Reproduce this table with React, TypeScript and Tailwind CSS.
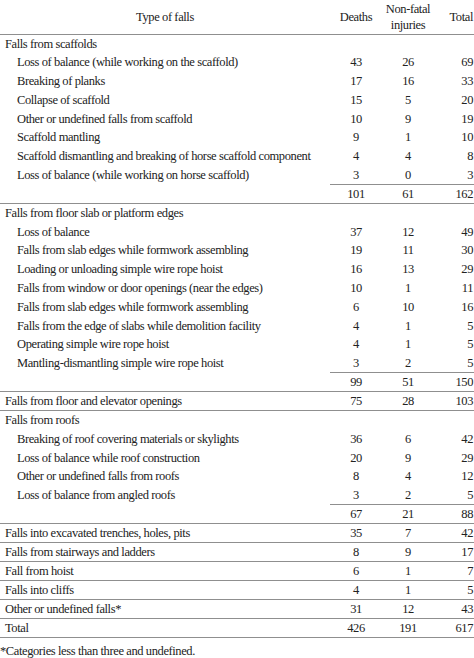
import React, { FC } from "react";

type Row = {
  label: string;
  d?: number;
  n?: number;
  t?: number;
  kind: "group" | "item" | "sub" | "single" | "total";
};

const rows: Row[] = [
  { label: "Falls from scaffolds", kind: "group" },
  { label: "Loss of balance (while working on the scaffold)", d: 43, n: 26, t: 69, kind: "item" },
  { label: "Breaking of planks", d: 17, n: 16, t: 33, kind: "item" },
  { label: "Collapse of scaffold", d: 15, n: 5, t: 20, kind: "item" },
  { label: "Other or undefined falls from scaffold", d: 10, n: 9, t: 19, kind: "item" },
  { label: "Scaffold mantling", d: 9, n: 1, t: 10, kind: "item" },
  { label: "Scaffold dismantling and breaking of horse scaffold component", d: 4, n: 4, t: 8, kind: "item" },
  { label: "Loss of balance (while working on horse scaffold)", d: 3, n: 0, t: 3, kind: "item" },
  { label: "", d: 101, n: 61, t: 162, kind: "sub" },
  { label: "Falls from floor slab or platform edges", kind: "group" },
  { label: "Loss of balance", d: 37, n: 12, t: 49, kind: "item" },
  { label: "Falls from slab edges while formwork assembling", d: 19, n: 11, t: 30, kind: "item" },
  { label: "Loading or unloading simple wire rope hoist", d: 16, n: 13, t: 29, kind: "item" },
  { label: "Falls from window or door openings (near the edges)", d: 10, n: 1, t: 11, kind: "item" },
  { label: "Falls from slab edges while formwork assembling", d: 6, n: 10, t: 16, kind: "item" },
  { label: "Falls from the edge of slabs while demolition facility", d: 4, n: 1, t: 5, kind: "item" },
  { label: "Operating simple wire rope hoist", d: 4, n: 1, t: 5, kind: "item" },
  { label: "Mantling-dismantling simple wire rope hoist", d: 3, n: 2, t: 5, kind: "item" },
  { label: "", d: 99, n: 51, t: 150, kind: "sub" },
  { label: "Falls from floor and elevator openings", d: 75, n: 28, t: 103, kind: "single" },
  { label: "Falls from roofs", kind: "group" },
  { label: "Breaking of roof covering materials or skylights", d: 36, n: 6, t: 42, kind: "item" },
  { label: "Loss of balance while roof construction", d: 20, n: 9, t: 29, kind: "item" },
  { label: "Other or undefined falls from roofs", d: 8, n: 4, t: 12, kind: "item" },
  { label: "Loss of balance from angled roofs", d: 3, n: 2, t: 5, kind: "item" },
  { label: "", d: 67, n: 21, t: 88, kind: "sub" },
  { label: "Falls into excavated trenches, holes, pits", d: 35, n: 7, t: 42, kind: "single" },
  { label: "Falls from stairways and ladders", d: 8, n: 9, t: 17, kind: "single" },
  { label: "Fall from hoist", d: 6, n: 1, t: 7, kind: "single" },
  { label: "Falls into cliffs", d: 4, n: 1, t: 5, kind: "single" },
  { label: "Other or undefined falls*", d: 31, n: 12, t: 43, kind: "single" },
  { label: "Total", d: 426, n: 191, t: 617, kind: "total" },
];

const line = "border-b-[1.5px] border-[#8f8f8f]";

const FallsTable: FC = () => {
  return (
    <table className="w-[474px] border-collapse table-fixed text-[12.5px] tracking-[-0.4px] text-[#222]">
      <colgroup>
        <col className="w-[330px]" />
        <col className="w-[52px]" />
        <col className="w-[52px]" />
        <col className="w-[40px]" />
      </colgroup>
      <thead>
        <tr className={`h-[34px] ${line}`}>
          <th className="font-normal text-center leading-[16px]">Type of falls</th>
          <th className="font-normal text-center leading-[16px]">Deaths</th>
          <th className="font-normal text-center leading-[16px]">
            Non-fatal
            <br />
            injuries
          </th>
          <th className="font-normal text-right pr-[1px] leading-[16px]">Total</th>
        </tr>
      </thead>
      <tbody>
        {rows.map((r, i) => {
          const closes = r.kind === "sub" || r.kind === "single" || r.kind === "total";
          const subTop = r.kind === "sub" ? "border-t-[1.5px] border-[#8f8f8f]" : "";
          return (
            <tr key={i} className={`h-[18.8px] ${closes ? line : ""}`}>
              <td className={`leading-[18px] whitespace-nowrap ${r.kind === "item" ? "pl-[17px]" : "pl-[5px]"}`}>
                {r.label}
              </td>
              <td className={`text-center leading-[18px] ${subTop}`}>{r.d}</td>
              <td className={`text-center leading-[18px] ${subTop}`}>{r.n}</td>
              <td className={`text-right pr-[1px] leading-[18px] ${subTop}`}>{r.t}</td>
            </tr>
          );
        })}
      </tbody>
    </table>
  );
};

const App: FC = () => {
  return (
    <main className="w-[474px] bg-white font-['Liberation_Serif'] overflow-hidden">
      <FallsTable />
      <p className="mt-[5px] text-[12.5px] tracking-[-0.4px] leading-[16px] text-[#222]">
        *Categories less than three and undefined.
      </p>
    </main>
  );
};

export default App;
